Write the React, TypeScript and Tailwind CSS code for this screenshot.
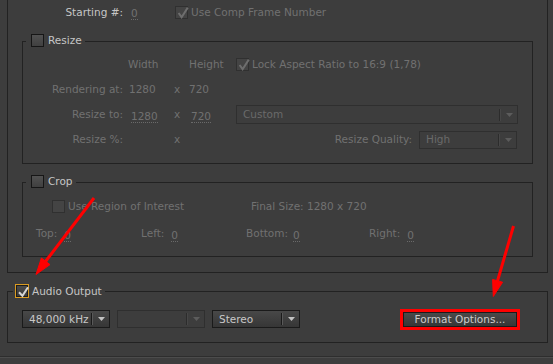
import React from 'react';

type BoxKind = 'enabled' | 'disabled' | 'audio';

const CheckMark = ({ d, color, width }: { d: string; color: string; width: number }) => (
  <svg width="14" height="14" viewBox="0 0 14 14" className="absolute left-0 top-0 overflow-visible">
    <path d={d} stroke={color} strokeWidth={width} fill="none" strokeLinejoin="miter" />
  </svg>
);

const CheckBox = ({ kind, checked }: { kind: BoxKind; checked?: boolean }) => {
  if (kind === 'audio') {
    return (
      <span className="relative block w-[14px] h-[14px] shrink-0 border border-[#d99b22]">
        <span className="block w-full h-full border border-[#1c1c1c] bg-linear-to-b from-[#4a4a4a] to-[#3a3a3a]" />
        {checked && <CheckMark d="M3 7.2 L6.4 10.8 L12 2.2" color="#d4d4d4" width={2} />}
      </span>
    );
  }
  const box =
    kind === 'enabled'
      ? 'border-[#161616] bg-linear-to-b from-[#515151] to-[#404040]'
      : 'border-[#303030] bg-[#444444]';
  return (
    <span className={`relative block w-[13px] h-[13px] shrink-0 border ${box}`}>
      {checked && <CheckMark d="M2.6 6 L5.6 10.2 L11.8 0.6" color="#6e6e6e" width={2} />}
    </span>
  );
};

// value with the dotted "scrubbable" underline
const Field = ({ children, className = '' }: { children: React.ReactNode; className?: string }) => (
  <span className={`inline-block leading-[12px] border-b border-dotted border-[#6a6a6a] ${className}`}>{children}</span>
);

const Select = ({ text, className, disabled }: { text?: string; className: string; disabled?: boolean }) => (
  <div
    className={`flex items-center border ${
      disabled
        ? 'border-[#2f2f2f] bg-[#3d3d3d] text-[#6a6a6a]'
        : 'border-[#1a1a1a] bg-linear-to-b from-[#484848] to-[#363636] text-[#c8c8c8]'
    } ${className}`}
  >
    <span className="flex-1 pl-[6px] whitespace-nowrap overflow-hidden">{text}</span>
    <span className={`w-px h-[12px] ${disabled ? 'bg-[#2c2c2c]' : 'bg-[#1a1a1a]'}`} />
    <span className={`w-px h-[12px] ${disabled ? 'bg-[#474747]' : 'bg-[#595959]'}`} />
    <span className="w-[16px] flex justify-center">
      <svg width="7" height="4" viewBox="0 0 7 4">
        <path d="M0 0H7L3.5 4Z" fill={disabled ? '#5c5c5c' : '#c2c2c2'} />
      </svg>
    </span>
  </div>
);

const Group = ({
  label,
  labelClass,
  className,
  children,
}: {
  label: React.ReactNode;
  labelClass: string;
  className: string;
  children: React.ReactNode;
}) => (
  <div className={`relative border border-[#222222] ${className}`}>
    <div className={`absolute flex items-center bg-[#3d3d3d] ${labelClass}`}>{label}</div>
    {children}
  </div>
);

const Arrows = () => (
  <svg width="553" height="364" className="absolute inset-0 pointer-events-none">
    <g fill="#ff0000" stroke="#ff0000">
      <line x1="94" y1="198" x2="45.5" y2="261.5" strokeWidth="3" />
      <path d="M36 274.5 L50 264.6 L41.4 258 Z" strokeWidth="1" />
      <line x1="513.5" y1="226" x2="497.5" y2="281" strokeWidth="3" />
      <path d="M493.3 296.5 L502.6 282.2 L492.6 279.4 Z" strokeWidth="1" />
    </g>
  </svg>
);

export default function App() {
  const dim = 'text-[#717171]';
  return (
    <div className="relative w-[553px] h-[364px] overflow-hidden bg-[#3d3d3d] font-['DejaVu_Sans',sans-serif] text-[10.5px] leading-none text-[#c6c6c6] select-none">
      {/* render settings frame (top edge is scrolled away) */}
      <div className="ml-[7px] w-[541px] h-[273px] border-x border-b border-[#222222] flex flex-col">
        <div className="mt-[4px] h-[16px] flex items-center">
          <span className="w-[115px] text-right">Starting #:</span>
          <span className={`ml-[8px] w-[44px] ${dim}`}>
            <Field className="mt-[3px]">0</Field>
          </span>
          <CheckBox kind="disabled" checked />
          <span className={`ml-[3px] ${dim}`}>Use Comp Frame Number</span>
        </div>

        <Group
          className="mt-[21px] ml-[14px] w-[511px] h-[123px] shrink-0 pt-[10px]"
          labelClass="-top-[8px] left-[3px] pl-[5px] pr-[3px] gap-[4px]"
          label={
            <>
              <CheckBox kind="enabled" />
              <span>Resize</span>
            </>
          }
        >
          <div className={`h-[25px] flex items-center ${dim}`}>
            <span className="w-[100px]" />
            <span className="ml-[5px] w-[46px]">Width</span>
            <span className="w-[15px]" />
            <span className="w-[47px]">Height</span>
            <CheckBox kind="disabled" checked />
            <span className="ml-[3px]">Lock Aspect Ratio to 16:9 (1,78)</span>
          </div>
          <div className={`h-[25px] flex items-center ${dim}`}>
            <span className="w-[100px] text-right">Rendering at:</span>
            <span className="ml-[6px] w-[45px]">1280</span>
            <span className="w-[15px]">x</span>
            <span className="w-[47px]">720</span>
          </div>
          <div className={`h-[25px] flex items-center ${dim}`}>
            <span className="w-[100px] text-right">Resize to:</span>
            <span className="ml-[6px] w-[45px] pl-[2px]">
              <Field className="mt-[3px]">1280</Field>
            </span>
            <span className="w-[15px]">x</span>
            <span className="w-[47px] pl-[2px]">
              <Field className="mt-[3px]">720</Field>
            </span>
            <Select text="Custom" disabled className="w-[282px] h-[19px]" />
          </div>
          <div className={`h-[25px] flex items-center ${dim}`}>
            <span className="w-[100px] text-right">Resize %:</span>
            <span className="ml-[6px] w-[45px]" />
            <span className="w-[15px]">x</span>
            <div className="w-[328px] flex items-center justify-end gap-[7px]">
              <span>Resize Quality:</span>
              <Select text="High" disabled className="w-[98px] h-[18px]" />
            </div>
          </div>
        </Group>

        <Group
          className="mt-[18px] ml-[14px] w-[511px] h-[75px] shrink-0 pt-[11px]"
          labelClass="-top-[8px] left-[3px] pl-[5px] pr-[3px] gap-[4px]"
          label={
            <>
              <CheckBox kind="enabled" />
              <span>Crop</span>
            </>
          }
        >
          <div className={`h-[25px] pl-[29px] flex items-center ${dim}`}>
            <div className="w-[199px] flex items-center gap-[3px]">
              <CheckBox kind="disabled" />
              <span>Use Region of Interest</span>
            </div>
            <span>Final Size: 1280 x 720</span>
          </div>
          <div className={`mt-[2px] h-[25px] pl-[13px] flex items-center ${dim}`}>
            <div className="w-[105px] flex items-center gap-[7px]">
              <span>Top:</span>
              <Field className="mt-[3px]">0</Field>
            </div>
            <div className="w-[105px] flex items-center gap-[7px]">
              <span>Left:</span>
              <Field className="mt-[3px]">0</Field>
            </div>
            <div className="w-[123px] flex items-center gap-[5px]">
              <span>Bottom:</span>
              <Field className="mt-[3px]">0</Field>
            </div>
            <div className="flex items-center gap-[7px]">
              <span>Right:</span>
              <Field className="mt-[3px]">0</Field>
            </div>
          </div>
        </Group>
      </div>

      {/* audio */}
      <Group
        className="mt-[18px] ml-[7px] w-[541px] h-[52px] pt-[18px] pl-[14px]"
        labelClass="-top-[8px] left-[5px] px-[2px] gap-[3px]"
        label={
          <>
            <CheckBox kind="audio" checked />
            <span className="pr-[1px]">Audio Output</span>
          </>
        }
      >
        <div className="h-[18px] flex items-center">
          <Select text="48,000 kHz" className="w-[88px] h-[18px]" />
          <Select disabled className="ml-[7px] w-[88px] h-[18px]" />
          <Select text="Stereo" className="ml-[7px] w-[88px] h-[18px]" />
          <button className="ml-[103px] w-[114px] h-[15px] flex items-center justify-center border border-[#1a1a1a] bg-linear-to-b from-[#4a4a4a] to-[#363636] text-[#cccccc] ring-[3px] ring-[#ff0000]">
            Format Options...
          </button>
        </div>
      </Group>

      <div className="mt-[13px] h-[2px] border-t border-b border-t-[#2e2e2e] border-b-[#4c4c4c]" />

      <Arrows />
    </div>
  );
}
